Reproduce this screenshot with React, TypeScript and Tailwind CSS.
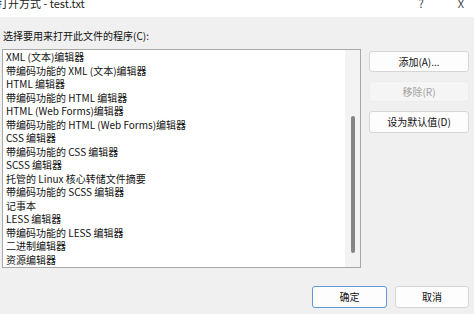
import React from "react";

const items = [
  "XML (文本)编辑器",
  "带编码功能的 XML (文本)编辑器",
  "HTML 编辑器",
  "带编码功能的 HTML 编辑器",
  "HTML (Web Forms)编辑器",
  "带编码功能的 HTML (Web Forms)编辑器",
  "CSS 编辑器",
  "带编码功能的 CSS 编辑器",
  "SCSS 编辑器",
  "托管的 Linux 核心转储文件摘要",
  "带编码功能的 SCSS 编辑器",
  "记事本",
  "LESS 编辑器",
  "带编码功能的 LESS 编辑器",
  "二进制编辑器",
  "资源编辑器",
];

export default function App() {
  return (
    <div
      className="w-[474px] h-[314px] bg-[#f0f0f0] overflow-hidden flex flex-col text-[10px] text-[#111]"
      style={{ fontFamily: '"Noto Sans CJK SC", "Noto Sans", sans-serif' }}
    >
      {/* title bar */}
      <div className="h-[17px] bg-white flex items-start shrink-0 overflow-hidden">
        <div className="-ml-[3px] -mt-[4px] leading-[14px] text-[11px] text-[#222]">打开方式 - test.txt</div>
        <div className="flex-1" />
        <div className="-mt-[4px] leading-[14px] text-[11px] text-[#444] mr-[34px]">?</div>
        <div className="-mt-[4px] leading-[14px] text-[11px] text-[#444] mr-[10px]">X</div>
      </div>

      {/* label */}
      <div className="mt-[13px] ml-[3px] leading-[12px]">选择要用来打开此文件的程序(C):</div>

      {/* main row */}
      <div className="mt-[7px] ml-[2px] flex items-start">
        <div className="w-[359px] h-[219px] border border-[#a8a8a8] bg-white flex">
          <div className="flex-1 pl-[3px] flex flex-col">
            {items.map((t) => (
              <div key={t} className="h-[13.5px] leading-[13.5px] whitespace-nowrap">
                {t}
              </div>
            ))}
          </div>
          <div className="w-[15px] bg-[#f3f3f3] flex flex-col items-center pt-[66px]">
            <div className="w-[4px] h-[137px] rounded-[2px] bg-[#858585]" />
          </div>
        </div>

        <div className="ml-[8px] w-[100px] mt-[2px] flex flex-col gap-[9px]">
          <button className="h-[21px] rounded-[3px] border border-[#d6d6d6] bg-[#fdfdfd] leading-none text-[#111]">
            添加(A)...
          </button>
          <button className="h-[21px] rounded-[3px] border border-[#ececec] bg-[#f5f5f5] leading-none text-[#a2a2a2]">
            移除(R)
          </button>
          <button className="h-[22px] rounded-[3px] border border-[#d6d6d6] bg-[#fdfdfd] leading-none text-[#111]">
            设为默认值(D)
          </button>
        </div>
      </div>

      {/* bottom buttons */}
      <div className="mt-[18px] flex justify-end gap-[8px] pr-[5px]">
        <button className="w-[75px] h-[22px] rounded-[3px] border border-[#5b9bd5] bg-[#fdfdfd] leading-none text-[#111]">
          确定
        </button>
        <button className="w-[74px] h-[22px] rounded-[3px] border border-[#d6d6d6] bg-[#fdfdfd] leading-none text-[#111]">
          取消
        </button>
      </div>
    </div>
  );
}
